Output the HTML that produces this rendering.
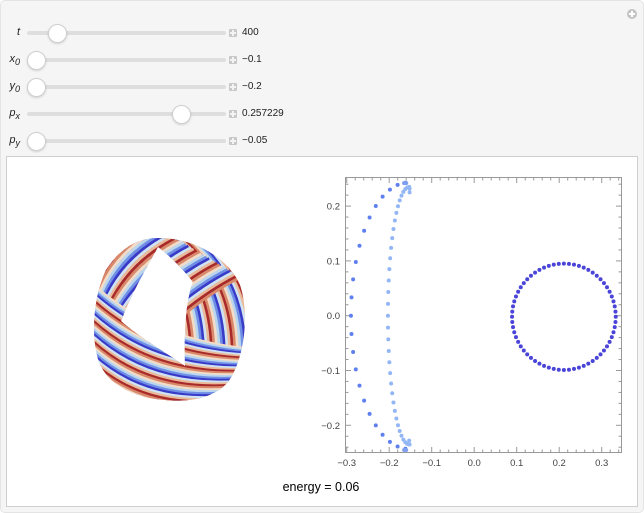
<!DOCTYPE html>
<html><head><meta charset="utf-8"><style>
body{margin:0;width:644px;height:513px;background:#fff;overflow:hidden;font-family:"Liberation Sans",sans-serif;}
#panel{position:absolute;left:0;top:0;width:642px;height:511px;background:#f5f5f5;border:1px solid #e4e4e4;border-radius:5px;}
#box{position:absolute;left:6px;top:156px;width:630px;height:349px;background:#fff;border:1px solid #cfcfcf;}
.lab{position:absolute;font-size:11px;font-style:italic;color:#222;text-align:right;width:20px;left:0}
.lab sub{font-size:9px;}
.track{position:absolute;left:27px;width:199px;height:4px;background:#dedede;border-radius:2px}
.thumb{position:absolute;width:17px;height:17px;border-radius:50%;background:#fff;border:1px solid #cfcfcf;box-shadow:0 1px 2px rgba(0,0,0,.15)}
.plus{position:absolute;left:229px;width:8px;height:8px;background:#c8c8c8;border-radius:1px}
.plus:before{content:"";position:absolute;left:3px;top:1px;width:2px;height:6px;background:#f3f3f3}
.plus:after{content:"";position:absolute;left:1px;top:3px;width:6px;height:2px;background:#f3f3f3}
.val{position:absolute;left:242px;font-size:10px;color:#222}
</style></head><body>
<div id="panel"></div>
<div style="position:absolute;left:627px;top:9px;width:10px;height:10px;border-radius:50%;background:#c4c4c4"><div style="position:absolute;left:4px;top:2px;width:2px;height:6px;background:#fff"></div><div style="position:absolute;left:2px;top:4px;width:6px;height:2px;background:#fff"></div></div>

<div class="lab" style="top:26px">t</div>
<div class="track" style="top:31px"></div><div class="thumb" style="left:48px;top:24px"></div>
<div class="plus" style="top:29px"></div><div class="val" style="top:27px">400</div>

<div class="lab" style="top:53px">x<sub>0</sub></div>
<div class="track" style="top:58px"></div><div class="thumb" style="left:27px;top:51px"></div>
<div class="plus" style="top:56px"></div><div class="val" style="top:54px">−0.1</div>

<div class="lab" style="top:80px">y<sub>0</sub></div>
<div class="track" style="top:85px"></div><div class="thumb" style="left:27px;top:78px"></div>
<div class="plus" style="top:83px"></div><div class="val" style="top:81px">−0.2</div>

<div class="lab" style="top:107px">p<sub>x</sub></div>
<div class="track" style="top:112px"></div><div class="thumb" style="left:172px;top:105px"></div>
<div class="plus" style="top:110px"></div><div class="val" style="top:108px">0.257229</div>

<div class="lab" style="top:134px">p<sub>y</sub></div>
<div class="track" style="top:139px"></div><div class="thumb" style="left:27px;top:132px"></div>
<div class="plus" style="top:137px"></div><div class="val" style="top:135px">−0.05</div>

<div id="box"></div>
<svg id="s" width="644" height="513" style="position:absolute;left:0;top:0">
<defs><clipPath id="tc"><path clip-rule="evenodd" d="M158,238 C195,238 228,258 240,285 C250,315 244,360 228,382 C212,400 185,402 165,400 C135,398 108,385 99,362 C90,335 94,295 106,270 C120,248 138,238 158,238 Z M158,247 C148,265 132,292 121,321 C140,338 165,352 185,366 C184,330 186,300 193,282 C182,268 170,256 158,247 Z"/></clipPath></defs>
<g id="torus" clip-path="url(#tc)"></g>
<rect x="345.5" y="177.5" width="276" height="275" fill="none" stroke="#999" stroke-width="1"/>
<g id="ticks" stroke="#999" stroke-width="1"></g>
<g id="lbl" font-size="9.5" fill="#444" font-family="Liberation Sans,sans-serif"></g>
<g id="dots"></g>
<text x="321" y="491" font-size="12.5" text-anchor="middle" fill="#000" font-family="Liberation Sans,sans-serif">energy = 0.06</text>
</svg>
<script>
var ns="http://www.w3.org/2000/svg";
function el(p,t,a){var e=document.createElementNS(ns,t);for(var k in a)e.setAttribute(k,a[k]);p.appendChild(e);return e;}
var cols=["#a82a2a","#d9896a","#f2dcc8","#b9d6ee","#6f8fe6","#3a3ac8","#cfe3f3","#e9b99a"];
var T=document.getElementById("torus");
el(T,"rect",{x:80,y:230,width:180,height:180,fill:"#e8c8b0"});
var i,c=0;
for(i=-30;i<40;i++){var o=i*2.6;el(T,"path",{d:"M"+(150+o)+",232 Q"+(225+o)+",290 "+(200+o)+",410",stroke:cols[(c++)%8],"stroke-width":2.8,fill:"none"});}
for(i=-30;i<30;i++){var o=i*2.6;el(T,"path",{d:"M"+(165+o)+",232 Q"+(100+o)+",265 "+(92+o*0.3)+",340",stroke:cols[(c++)%8],"stroke-width":2.8,fill:"none",transform:"translate(0,"+(o*0.6)+")"});}
for(i=-2;i<34;i++){var o=i*2.6;el(T,"path",{d:"M88,"+(285+o)+" Q150,"+(345+o)+" 250,"+(352+o*0.6),stroke:cols[(c++)%8],"stroke-width":2.8,fill:"none"});}
var K=document.getElementById("ticks"),L=document.getElementById("lbl");
function X(v){return 346.7+(v+0.3)*425;}function Y(v){return 315.7-v*548;}
for(i=-30;i<=34;i+=2){var x=X(i/100),len=(i%10==0)?5:2.5;el(K,"line",{x1:x,y1:452,x2:x,y2:452-len});el(K,"line",{x1:x,y1:178,x2:x,y2:178+len});}
for(i=-24;i<=24;i+=2){var y=Y(i/100),len=(i%10==0)?5:2.5;el(K,"line",{x1:346,y1:y,x2:346+len,y2:y});el(K,"line",{x1:621,y1:y,x2:621-len,y2:y});}
["−0.3","−0.2","−0.1","0.0","0.1","0.2","0.3"].forEach(function(t,k){var tx=el(L,"text",{x:X(-0.3+k*0.1),y:466,"text-anchor":"middle"});tx.textContent=t;});
["−0.2","−0.1","0.0","0.1","0.2"].forEach(function(t,k){var tx=el(L,"text",{x:340,y:Y(-0.2+k*0.1)+3.5,"text-anchor":"end"});tx.textContent=t;});
var D=document.getElementById("dots");
function dot(vx,vy,col){el(D,"circle",{cx:X(vx),cy:Y(vy),r:2,fill:col});}
for(i=0;i<=22;i++){var a=Math.PI/2+0.05+i/22*(Math.PI-0.1);dot(-0.155+0.135*Math.cos(a),0.243*Math.sin(a),"#5f80ee");}
for(i=0;i<=34;i++){var a=Math.PI/2+i/34*Math.PI;dot(-0.153+0.05*Math.cos(a),0.235*Math.sin(a),"#93b6f5");}
dot(-0.152,0.232,"#93b6f5");dot(-0.152,0.225,"#93b6f5");dot(-0.152,-0.235,"#93b6f5");dot(-0.153,-0.228,"#93b6f5");
dot(-0.16,0.242,"#7fa0f2");dot(-0.165,0.242,"#7fa0f2");dot(-0.16,-0.245,"#7fa0f2");dot(-0.165,-0.245,"#7fa0f2");
for(i=0;i<64;i++){var a=i/64*2*Math.PI;dot(0.211+0.122*Math.cos(a),-0.002+0.097*Math.sin(a),"#4a44d8");}
</script>
</body></html>
